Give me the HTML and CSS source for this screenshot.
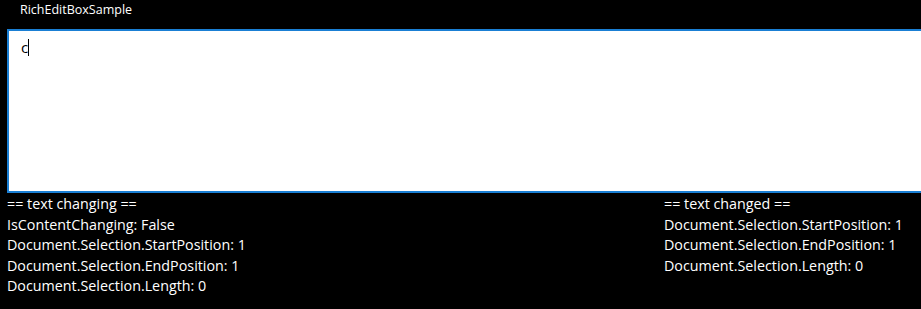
FILE: index.html
```html
<!DOCTYPE html>
<html>
<head>
<meta charset="utf-8">
<link rel="stylesheet" href="styles.css">
</head>
<body>
<div class="app">
  <div class="titlebar">RichEditBoxSample</div>
  <div class="editor"><span class="content">c</span><span class="caret"></span></div>
  <div class="panels">
    <div class="panel">
      <div class="line">== text changing ==</div>
      <div class="line">IsContentChanging: False</div>
      <div class="line">Document.Selection.StartPosition: 1</div>
      <div class="line">Document.Selection.EndPosition: 1</div>
      <div class="line">Document.Selection.Length: 0</div>
    </div>
    <div class="panel right">
      <div class="line">== text changed ==</div>
      <div class="line">Document.Selection.StartPosition: 1</div>
      <div class="line">Document.Selection.EndPosition: 1</div>
      <div class="line">Document.Selection.Length: 0</div>
    </div>
  </div>
</div>
</body>
</html>
```
FILE: styles.css
```css
html, body {
  margin: 0;
  padding: 0;
  background: #000;
  width: 921px;
  height: 309px;
  overflow: hidden;
}
.app {
  font-family: "Open Sans", "Noto Sans", sans-serif;
  color: #fff;
}
.titlebar {
  height: 29px;
  box-sizing: border-box;
  padding: 1px 0 0 20px;
  font-size: 12.5px;
  line-height: 18px;
}
.editor {
  margin-left: 7px;
  margin-right: -10px;
  height: 164px;
  box-sizing: border-box;
  border: 2px solid #1a7fd4;
  background: #fff;
  padding: 6px 0 0 12px;
  display: flex;
  align-items: flex-start;
  color: #000;
  font-size: 15px;
  line-height: 20px;
}
.caret {
  width: 1px;
  height: 17px;
  margin-top: 2px;
  background: #000;
}
.panels {
  display: flex;
  justify-content: space-between;
  padding: 1px 0 0 7px;
}
.panel.right {
  width: 257px;
}
.line {
  font-size: 14.3px;
  line-height: 20.5px;
  white-space: nowrap;
}
```
